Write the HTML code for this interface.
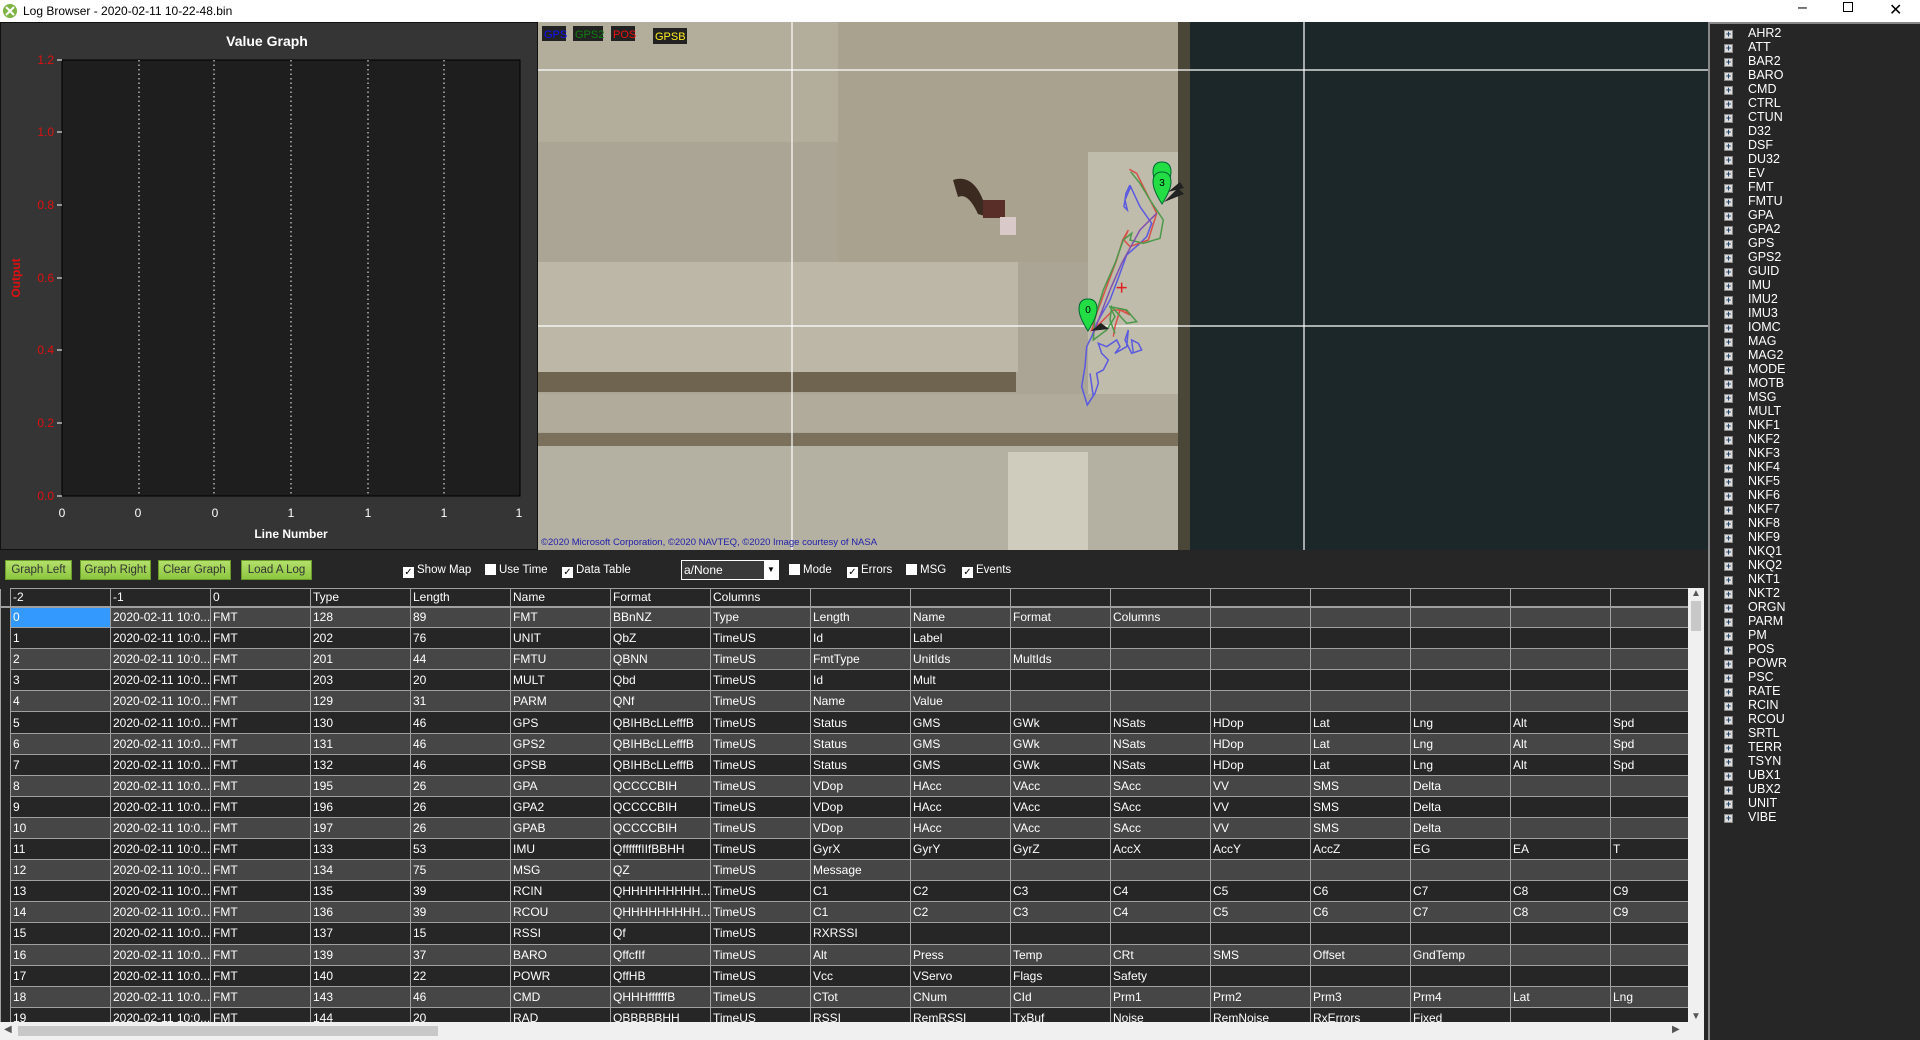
<!DOCTYPE html>
<html><head><meta charset="utf-8"><style>
*{margin:0;padding:0;box-sizing:border-box}
body{width:1920px;height:1040px;overflow:hidden;background:#262626;font-family:"Liberation Sans",sans-serif;position:relative}
.abs{position:absolute}
#title{left:0;top:0;width:1920px;height:22px;background:#fff;font-size:12px;color:#000}
#gp{left:0;top:22px;width:538px;height:528px;background:#353535;border:1px solid #111}
.btn{position:absolute;top:560px;height:20px;background:linear-gradient(#b3e06a,#8cc63f);border:1px solid #6a9a2a;font-size:11.5px;color:#333;text-align:center;line-height:18px}
.cb{position:absolute;top:563px;font-size:11.5px;color:#fff;line-height:14px}
.cb i{display:inline-block;width:11px;height:11px;background:#fff;vertical-align:-2px;margin-right:3px;color:#000;font-style:normal;font-size:10px;line-height:11px;text-align:center}
table{position:absolute;left:0;top:588px;border-collapse:collapse;table-layout:fixed;width:1690px;font-size:12px;color:#fff}
td{border:1px solid #a0a0a0;height:21.1px;padding:0 2px;white-space:nowrap;overflow:hidden}
tr.h td{height:18px;background:#262626;border-bottom:2px solid #a0a0a0}
tr.l td{background:#464646}
tr.d td{background:#262626}
td.rh{background:#262626!important;border-top:none;border-bottom:none}
#tree{left:1708px;top:22px;width:212px;height:1018px;background:#262626;border-left:2px solid #888;border-top:2px solid #888}
.ti{position:absolute;left:38px;font-size:12.5px;color:#fff;line-height:14px}
.pl{position:absolute;left:14px;width:9px;height:9px;background:#ddd;border:1px solid #888;font-size:9px;line-height:7px;text-align:center;color:#246;font-weight:bold}
</style></head><body>
<div id="title" class="abs">
<svg class="abs" style="left:2px;top:3px" width="16" height="16"><circle cx="8" cy="8" r="7" fill="#7cb342"/><path d="M4 4L12 12M12 4L4 12" stroke="#fff" stroke-width="2"/></svg>
<span class="abs" style="left:23px;top:4px">Log Browser - 2020-02-11 10-22-48.bin</span>
<span class="abs" style="left:1798px;top:-1px;font-size:16px">–</span>
<span class="abs" style="left:1843px;top:2px;width:10px;height:10px;border:1px solid #000"></span>
<span class="abs" style="left:1889px;top:0px;font-size:16px">✕</span>
</div>
<div id="gp" class="abs">
<svg width="538" height="528" style="position:absolute;left:-1px;top:-1px">
<text x="267" y="24" fill="#fff" font-size="14" font-weight="bold" text-anchor="middle" font-family="Liberation Sans">Value Graph</text>
<rect x="62" y="38" width="458" height="436" fill="#1e1e1e" stroke="#000"/>
<g stroke="#fff" stroke-dasharray="1.5,3" stroke-width="1"><line x1="139" y1="38" x2="139" y2="474"/><line x1="214" y1="38" x2="214" y2="474"/><line x1="291" y1="38" x2="291" y2="474"/><line x1="368" y1="38" x2="368" y2="474"/><line x1="444" y1="38" x2="444" y2="474"/></g>
<g fill="#e01010" font-size="12" text-anchor="end" font-family="Liberation Sans"><text x="54" y="42">1.2</text><text x="54" y="114">1.0</text><text x="54" y="187">0.8</text><text x="54" y="260">0.6</text><text x="54" y="332">0.4</text><text x="54" y="405">0.2</text><text x="54" y="478">0.0</text></g>
<text transform="translate(20,256) rotate(-90)" fill="#e01010" font-size="12" font-weight="bold" text-anchor="middle" font-family="Liberation Sans">Output</text>
<g fill="#fff" font-size="12" text-anchor="middle" font-family="Liberation Sans"><text x="62" y="495">0</text><text x="138" y="495">0</text><text x="215" y="495">0</text><text x="291" y="495">1</text><text x="368" y="495">1</text><text x="444" y="495">1</text><text x="519" y="495">1</text></g>
<text x="291" y="516" fill="#fff" font-size="12" font-weight="bold" text-anchor="middle" font-family="Liberation Sans">Line Number</text>
<g stroke="#fff"><line x1="57" y1="38" x2="62" y2="38"/><line x1="57" y1="110" x2="62" y2="110"/><line x1="57" y1="183" x2="62" y2="183"/><line x1="57" y1="256" x2="62" y2="256"/><line x1="57" y1="328" x2="62" y2="328"/><line x1="57" y1="401" x2="62" y2="401"/><line x1="57" y1="474" x2="62" y2="474"/></g>
</svg></div>
<svg class="abs" style="left:538px;top:22px" width="1170" height="528">
<rect width="1170" height="528" fill="#aaa594"/>
<rect x="0" y="0" width="650" height="120" fill="#b3ad9b"/>
<rect x="300" y="0" width="350" height="240" fill="#a9a28f"/>
<rect x="0" y="240" width="480" height="110" fill="#bcb7a6"/>
<rect x="550" y="130" width="100" height="250" fill="#c0bcab"/>
<rect x="0" y="350" width="478" height="20" fill="#6f6450"/>
<rect x="0" y="372" width="640" height="38" fill="#b0ab9b"/>
<rect x="0" y="411" width="640" height="13" fill="#7b705c"/>
<rect x="0" y="424" width="650" height="104" fill="#b4b0a2"/>
<rect x="470" y="430" width="80" height="98" fill="#cfcbbd"/>
<path d="M415 158 Q440 150 450 195 L440 192 Q430 170 420 175Z" fill="#3a2a20"/>
<rect x="445" y="178" width="22" height="18" fill="#5a2e28"/>
<rect x="462" y="195" width="16" height="18" fill="#d9c9c9"/>
<rect x="640" y="0" width="20" height="528" fill="#4a4638"/>
<rect x="652" y="0" width="518" height="528" fill="#1c2729"/>
<g stroke="#fff" stroke-width="1.2"><line x1="254" y1="0" x2="254" y2="528"/><line x1="766" y1="0" x2="766" y2="528"/><line x1="0" y1="48" x2="1170" y2="48"/><line x1="0" y1="304" x2="1170" y2="304"/></g>
<g transform="translate(462,118) scale(0.3333)" fill="none" stroke-width="4.5">
<path d="M390 135 L378 160 L372 200 L382 210 L375 180 L392 140 L420 200 L455 250 L440 290 L420 310 L380 345 L360 400 L330 480 L290 550 L275 590 L260 620 L255 680 L245 740 L262 795 L285 760 L295 730 L290 700 L310 690 L325 660 L305 640 L295 610 L320 620 L350 600 L360 620 L345 640 L380 620 L385 570 L375 600 L395 640 L425 630 L415 610 L395 600 L400 640 M270 700 L280 770" stroke="#5a5ae0"/>
<path d="M388 88 L410 100 L440 160 L470 220 L445 300 L390 320 L372 300 L385 270 L368 300 L350 360 L320 440 L290 520 L275 570 L300 550 L340 510 L375 510 L390 525 L360 510 L345 560 L340 590" stroke="#d8504a"/>
<path d="M392 95 L420 130 L450 180 L490 240 L480 295 L430 310 L390 300 L395 280 L370 300 L345 370 L310 450 L285 530 L280 600 L320 570 L345 530 L330 500 L380 510 L410 545 L380 550 L335 500 L330 540 L345 580" stroke="#4a9a4a"/>
<path d="M280 580 L330 450 L365 370 L420 270 L470 220" stroke="#8050b0"/>
<path d="M350 443 L380 443 M365 428 L365 458" stroke="#e02020"/>
</g>
<g><path d="M550 277 q9 0 9 10 q0 8 -9 22 q-9 -14 -9 -22 q0 -10 9 -10Z" fill="#22dd44" stroke="#063"/><text x="550" y="291" font-size="10" text-anchor="middle">0</text>
<path d="M553 309 l10 -8 l8 6 Z" fill="#222"/>
<path d="M624 140 q9 0 9 10 q0 8 -9 22 q-9 -14 -9 -22 q0 -10 9 -10Z" fill="#22dd44" stroke="#063"/>
<path d="M624 150 q9 0 9 10 q0 8 -9 22 q-9 -14 -9 -22 q0 -10 9 -10Z" fill="#22dd44" stroke="#063"/><text x="624" y="164" font-size="10" text-anchor="middle">3</text>
<path d="M626 180 l14 -14 l6 6 Z M630 170 l12 -10 l4 6Z" fill="#222"/></g>
<rect x="4" y="4" width="24" height="15" fill="#222"/><text x="6" y="16" fill="#1010ff" font-size="11">GPS</text>
<rect x="35" y="4" width="30" height="15" fill="#222"/><text x="37" y="16" fill="#108010" font-size="11">GPS2</text>
<rect x="73" y="4" width="24" height="15" fill="#222"/><text x="75" y="16" fill="#ee1010" font-size="11">POS</text>
<rect x="115" y="6" width="34" height="16" fill="#222"/><text x="117" y="18" fill="#ffee22" font-size="11">GPSB</text>
<text x="3" y="523" fill="#2222aa" font-size="9.5" font-family="Liberation Sans">©2020 Microsoft Corporation, ©2020 NAVTEQ, ©2020 Image courtesy of NASA</text>
</svg>
<div class="btn" style="left:5px;width:67px">Graph Left</div>
<div class="btn" style="left:80px;width:71px">Graph Right</div>
<div class="btn" style="left:158px;width:73px">Clear Graph</div>
<div class="btn" style="left:241px;width:71px">Load A Log</div>
<div class="cb" style="left:403px"><i>✓</i>Show Map</div>
<div class="cb" style="left:485px"><i></i>Use Time</div>
<div class="cb" style="left:562px"><i>✓</i>Data Table</div>
<div class="abs" style="left:681px;top:560px;width:98px;height:20px;background:#3a3a3a;border:1px solid #fff;color:#fff;font-size:12px;padding:2px 2px">a/None<span style="position:absolute;right:0;top:0;width:14px;height:18px;background:#fff;color:#000;font-size:8px;text-align:center;line-height:18px">▼</span></div>
<div class="cb" style="left:789px"><i></i>Mode</div>
<div class="cb" style="left:847px"><i>✓</i>Errors</div>
<div class="cb" style="left:906px"><i></i>MSG</div>
<div class="cb" style="left:962px"><i>✓</i>Events</div>
<table>
<colgroup><col style="width:10px"><col style="width:100px"><col style="width:100px"><col style="width:100px"><col style="width:100px"><col style="width:100px"><col style="width:100px"><col style="width:100px"><col style="width:100px"><col style="width:100px"><col style="width:100px"><col style="width:100px"><col style="width:100px"><col style="width:100px"><col style="width:100px"><col style="width:100px"><col style="width:100px"><col style="width:80px"></colgroup>
<tr class="h"><td class="rh"></td><td>-2</td><td>-1</td><td>0</td><td>Type</td><td>Length</td><td>Name</td><td>Format</td><td>Columns</td><td></td><td></td><td></td><td></td><td></td><td></td><td></td><td></td><td></td></tr>
<tr class="l"><td class="rh"></td><td style="background:#3399ff">0</td><td>2020-02-11 10:0...</td><td>FMT</td><td>128</td><td>89</td><td>FMT</td><td>BBnNZ</td><td>Type</td><td>Length</td><td>Name</td><td>Format</td><td>Columns</td><td></td><td></td><td></td><td></td><td></td></tr>
<tr class="d"><td class="rh"></td><td>1</td><td>2020-02-11 10:0...</td><td>FMT</td><td>202</td><td>76</td><td>UNIT</td><td>QbZ</td><td>TimeUS</td><td>Id</td><td>Label</td><td></td><td></td><td></td><td></td><td></td><td></td><td></td></tr>
<tr class="l"><td class="rh"></td><td>2</td><td>2020-02-11 10:0...</td><td>FMT</td><td>201</td><td>44</td><td>FMTU</td><td>QBNN</td><td>TimeUS</td><td>FmtType</td><td>UnitIds</td><td>MultIds</td><td></td><td></td><td></td><td></td><td></td><td></td></tr>
<tr class="d"><td class="rh"></td><td>3</td><td>2020-02-11 10:0...</td><td>FMT</td><td>203</td><td>20</td><td>MULT</td><td>Qbd</td><td>TimeUS</td><td>Id</td><td>Mult</td><td></td><td></td><td></td><td></td><td></td><td></td><td></td></tr>
<tr class="l"><td class="rh"></td><td>4</td><td>2020-02-11 10:0...</td><td>FMT</td><td>129</td><td>31</td><td>PARM</td><td>QNf</td><td>TimeUS</td><td>Name</td><td>Value</td><td></td><td></td><td></td><td></td><td></td><td></td><td></td></tr>
<tr class="d"><td class="rh"></td><td>5</td><td>2020-02-11 10:0...</td><td>FMT</td><td>130</td><td>46</td><td>GPS</td><td>QBIHBcLLefffB</td><td>TimeUS</td><td>Status</td><td>GMS</td><td>GWk</td><td>NSats</td><td>HDop</td><td>Lat</td><td>Lng</td><td>Alt</td><td>Spd</td></tr>
<tr class="l"><td class="rh"></td><td>6</td><td>2020-02-11 10:0...</td><td>FMT</td><td>131</td><td>46</td><td>GPS2</td><td>QBIHBcLLefffB</td><td>TimeUS</td><td>Status</td><td>GMS</td><td>GWk</td><td>NSats</td><td>HDop</td><td>Lat</td><td>Lng</td><td>Alt</td><td>Spd</td></tr>
<tr class="d"><td class="rh"></td><td>7</td><td>2020-02-11 10:0...</td><td>FMT</td><td>132</td><td>46</td><td>GPSB</td><td>QBIHBcLLefffB</td><td>TimeUS</td><td>Status</td><td>GMS</td><td>GWk</td><td>NSats</td><td>HDop</td><td>Lat</td><td>Lng</td><td>Alt</td><td>Spd</td></tr>
<tr class="l"><td class="rh"></td><td>8</td><td>2020-02-11 10:0...</td><td>FMT</td><td>195</td><td>26</td><td>GPA</td><td>QCCCCBIH</td><td>TimeUS</td><td>VDop</td><td>HAcc</td><td>VAcc</td><td>SAcc</td><td>VV</td><td>SMS</td><td>Delta</td><td></td><td></td></tr>
<tr class="d"><td class="rh"></td><td>9</td><td>2020-02-11 10:0...</td><td>FMT</td><td>196</td><td>26</td><td>GPA2</td><td>QCCCCBIH</td><td>TimeUS</td><td>VDop</td><td>HAcc</td><td>VAcc</td><td>SAcc</td><td>VV</td><td>SMS</td><td>Delta</td><td></td><td></td></tr>
<tr class="l"><td class="rh"></td><td>10</td><td>2020-02-11 10:0...</td><td>FMT</td><td>197</td><td>26</td><td>GPAB</td><td>QCCCCBIH</td><td>TimeUS</td><td>VDop</td><td>HAcc</td><td>VAcc</td><td>SAcc</td><td>VV</td><td>SMS</td><td>Delta</td><td></td><td></td></tr>
<tr class="d"><td class="rh"></td><td>11</td><td>2020-02-11 10:0...</td><td>FMT</td><td>133</td><td>53</td><td>IMU</td><td>QffffffIIfBBHH</td><td>TimeUS</td><td>GyrX</td><td>GyrY</td><td>GyrZ</td><td>AccX</td><td>AccY</td><td>AccZ</td><td>EG</td><td>EA</td><td>T</td></tr>
<tr class="l"><td class="rh"></td><td>12</td><td>2020-02-11 10:0...</td><td>FMT</td><td>134</td><td>75</td><td>MSG</td><td>QZ</td><td>TimeUS</td><td>Message</td><td></td><td></td><td></td><td></td><td></td><td></td><td></td><td></td></tr>
<tr class="d"><td class="rh"></td><td>13</td><td>2020-02-11 10:0...</td><td>FMT</td><td>135</td><td>39</td><td>RCIN</td><td>QHHHHHHHHH...</td><td>TimeUS</td><td>C1</td><td>C2</td><td>C3</td><td>C4</td><td>C5</td><td>C6</td><td>C7</td><td>C8</td><td>C9</td></tr>
<tr class="l"><td class="rh"></td><td>14</td><td>2020-02-11 10:0...</td><td>FMT</td><td>136</td><td>39</td><td>RCOU</td><td>QHHHHHHHHH...</td><td>TimeUS</td><td>C1</td><td>C2</td><td>C3</td><td>C4</td><td>C5</td><td>C6</td><td>C7</td><td>C8</td><td>C9</td></tr>
<tr class="d"><td class="rh"></td><td>15</td><td>2020-02-11 10:0...</td><td>FMT</td><td>137</td><td>15</td><td>RSSI</td><td>Qf</td><td>TimeUS</td><td>RXRSSI</td><td></td><td></td><td></td><td></td><td></td><td></td><td></td><td></td></tr>
<tr class="l"><td class="rh"></td><td>16</td><td>2020-02-11 10:0...</td><td>FMT</td><td>139</td><td>37</td><td>BARO</td><td>QffcfIf</td><td>TimeUS</td><td>Alt</td><td>Press</td><td>Temp</td><td>CRt</td><td>SMS</td><td>Offset</td><td>GndTemp</td><td></td><td></td></tr>
<tr class="d"><td class="rh"></td><td>17</td><td>2020-02-11 10:0...</td><td>FMT</td><td>140</td><td>22</td><td>POWR</td><td>QffHB</td><td>TimeUS</td><td>Vcc</td><td>VServo</td><td>Flags</td><td>Safety</td><td></td><td></td><td></td><td></td><td></td></tr>
<tr class="l"><td class="rh"></td><td>18</td><td>2020-02-11 10:0...</td><td>FMT</td><td>143</td><td>46</td><td>CMD</td><td>QHHHffffffB</td><td>TimeUS</td><td>CTot</td><td>CNum</td><td>CId</td><td>Prm1</td><td>Prm2</td><td>Prm3</td><td>Prm4</td><td>Lat</td><td>Lng</td></tr>
<tr class="d"><td class="rh"></td><td>19</td><td>2020-02-11 10:0...</td><td>FMT</td><td>144</td><td>20</td><td>RAD</td><td>QBBBBBHH</td><td>TimeUS</td><td>RSSI</td><td>RemRSSI</td><td>TxBuf</td><td>Noise</td><td>RemNoise</td><td>RxErrors</td><td>Fixed</td><td></td><td></td></tr>
</table>
<div class="abs" style="left:1688px;top:588px;width:16px;height:436px;background:#f0f0f0;font-size:10px;color:#555;text-align:center">▲<div style="width:10px;height:30px;background:#c8c8c8;margin:2px auto"></div><div style="position:absolute;bottom:2px;width:16px">▼</div></div>
<div class="abs" style="left:0;top:1022px;width:1704px;height:18px;background:#f0f0f0"><div style="position:absolute;left:18px;top:4px;width:420px;height:10px;background:#c8c8c8"></div><span style="position:absolute;left:4px;top:2px;font-size:10px;color:#555">◀</span><span style="position:absolute;left:1672px;top:2px;font-size:10px;color:#555">▶</span></div>
<div id="tree" class="abs">
<div class="pl" style="top:6px">+</div><div class="ti" style="top:2px">AHR2</div>
<div class="pl" style="top:20px">+</div><div class="ti" style="top:16px">ATT</div>
<div class="pl" style="top:34px">+</div><div class="ti" style="top:30px">BAR2</div>
<div class="pl" style="top:48px">+</div><div class="ti" style="top:44px">BARO</div>
<div class="pl" style="top:62px">+</div><div class="ti" style="top:58px">CMD</div>
<div class="pl" style="top:76px">+</div><div class="ti" style="top:72px">CTRL</div>
<div class="pl" style="top:90px">+</div><div class="ti" style="top:86px">CTUN</div>
<div class="pl" style="top:104px">+</div><div class="ti" style="top:100px">D32</div>
<div class="pl" style="top:118px">+</div><div class="ti" style="top:114px">DSF</div>
<div class="pl" style="top:132px">+</div><div class="ti" style="top:128px">DU32</div>
<div class="pl" style="top:146px">+</div><div class="ti" style="top:142px">EV</div>
<div class="pl" style="top:160px">+</div><div class="ti" style="top:156px">FMT</div>
<div class="pl" style="top:174px">+</div><div class="ti" style="top:170px">FMTU</div>
<div class="pl" style="top:188px">+</div><div class="ti" style="top:184px">GPA</div>
<div class="pl" style="top:202px">+</div><div class="ti" style="top:198px">GPA2</div>
<div class="pl" style="top:216px">+</div><div class="ti" style="top:212px">GPS</div>
<div class="pl" style="top:230px">+</div><div class="ti" style="top:226px">GPS2</div>
<div class="pl" style="top:244px">+</div><div class="ti" style="top:240px">GUID</div>
<div class="pl" style="top:258px">+</div><div class="ti" style="top:254px">IMU</div>
<div class="pl" style="top:272px">+</div><div class="ti" style="top:268px">IMU2</div>
<div class="pl" style="top:286px">+</div><div class="ti" style="top:282px">IMU3</div>
<div class="pl" style="top:300px">+</div><div class="ti" style="top:296px">IOMC</div>
<div class="pl" style="top:314px">+</div><div class="ti" style="top:310px">MAG</div>
<div class="pl" style="top:328px">+</div><div class="ti" style="top:324px">MAG2</div>
<div class="pl" style="top:342px">+</div><div class="ti" style="top:338px">MODE</div>
<div class="pl" style="top:356px">+</div><div class="ti" style="top:352px">MOTB</div>
<div class="pl" style="top:370px">+</div><div class="ti" style="top:366px">MSG</div>
<div class="pl" style="top:384px">+</div><div class="ti" style="top:380px">MULT</div>
<div class="pl" style="top:398px">+</div><div class="ti" style="top:394px">NKF1</div>
<div class="pl" style="top:412px">+</div><div class="ti" style="top:408px">NKF2</div>
<div class="pl" style="top:426px">+</div><div class="ti" style="top:422px">NKF3</div>
<div class="pl" style="top:440px">+</div><div class="ti" style="top:436px">NKF4</div>
<div class="pl" style="top:454px">+</div><div class="ti" style="top:450px">NKF5</div>
<div class="pl" style="top:468px">+</div><div class="ti" style="top:464px">NKF6</div>
<div class="pl" style="top:482px">+</div><div class="ti" style="top:478px">NKF7</div>
<div class="pl" style="top:496px">+</div><div class="ti" style="top:492px">NKF8</div>
<div class="pl" style="top:510px">+</div><div class="ti" style="top:506px">NKF9</div>
<div class="pl" style="top:524px">+</div><div class="ti" style="top:520px">NKQ1</div>
<div class="pl" style="top:538px">+</div><div class="ti" style="top:534px">NKQ2</div>
<div class="pl" style="top:552px">+</div><div class="ti" style="top:548px">NKT1</div>
<div class="pl" style="top:566px">+</div><div class="ti" style="top:562px">NKT2</div>
<div class="pl" style="top:580px">+</div><div class="ti" style="top:576px">ORGN</div>
<div class="pl" style="top:594px">+</div><div class="ti" style="top:590px">PARM</div>
<div class="pl" style="top:608px">+</div><div class="ti" style="top:604px">PM</div>
<div class="pl" style="top:622px">+</div><div class="ti" style="top:618px">POS</div>
<div class="pl" style="top:636px">+</div><div class="ti" style="top:632px">POWR</div>
<div class="pl" style="top:650px">+</div><div class="ti" style="top:646px">PSC</div>
<div class="pl" style="top:664px">+</div><div class="ti" style="top:660px">RATE</div>
<div class="pl" style="top:678px">+</div><div class="ti" style="top:674px">RCIN</div>
<div class="pl" style="top:692px">+</div><div class="ti" style="top:688px">RCOU</div>
<div class="pl" style="top:706px">+</div><div class="ti" style="top:702px">SRTL</div>
<div class="pl" style="top:720px">+</div><div class="ti" style="top:716px">TERR</div>
<div class="pl" style="top:734px">+</div><div class="ti" style="top:730px">TSYN</div>
<div class="pl" style="top:748px">+</div><div class="ti" style="top:744px">UBX1</div>
<div class="pl" style="top:762px">+</div><div class="ti" style="top:758px">UBX2</div>
<div class="pl" style="top:776px">+</div><div class="ti" style="top:772px">UNIT</div>
<div class="pl" style="top:790px">+</div><div class="ti" style="top:786px">VIBE</div>
</div>
</body></html>
